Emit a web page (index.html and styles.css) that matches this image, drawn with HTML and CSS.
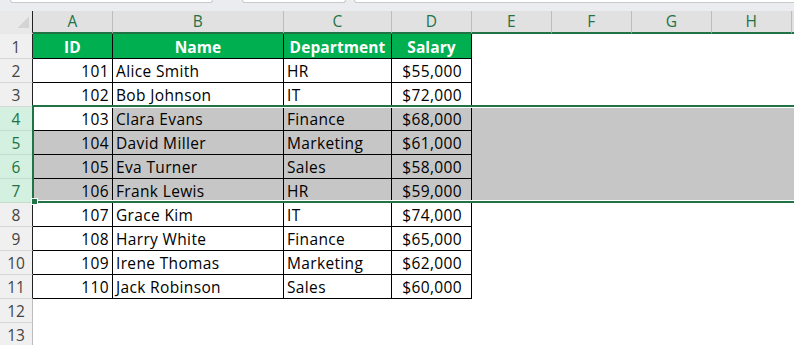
FILE: index.html
```html
<!DOCTYPE html>
<html>
<head>
<meta charset="utf-8">
<link rel="stylesheet" href="styles.css">
</head>
<body>
<div class="topstrip">
  <div class="box box1"></div>
  <div class="box box2"></div>
  <div class="box box3"></div>
</div>
<div class="sheet">
  <div class="corner"></div>
  <div class="ch">A</div><div class="ch">B</div><div class="ch">C</div><div class="ch">D</div>
  <div class="ch">E</div><div class="ch">F</div><div class="ch">G</div><div class="ch">H</div><div class="ch last"></div>

  <div class="rh tb r1">1</div>
  <div class="c t h r1">ID</div><div class="c t h r1">Name</div><div class="c t h r1">Department</div><div class="c t h r1">Salary</div>
  <div class="c r1"></div><div class="c r1"></div><div class="c r1"></div><div class="c r1"></div><div class="c r1"></div>

  <div class="rh tb">2</div>
  <div class="c t num">101</div><div class="c t">Alice Smith</div><div class="c t">HR</div><div class="c t cur">$55,000</div>
  <div class="c"></div><div class="c"></div><div class="c"></div><div class="c"></div><div class="c"></div>

  <div class="rh tb">3</div>
  <div class="c t num">102</div><div class="c t">Bob Johnson</div><div class="c t">IT</div><div class="c t cur">$72,000</div>
  <div class="c"></div><div class="c"></div><div class="c"></div><div class="c"></div><div class="c"></div>

  <div class="rh sel">4</div>
  <div class="c t num">103</div><div class="c t g">Clara Evans</div><div class="c t g">Finance</div><div class="c t g cur">$68,000</div>
  <div class="c g"></div><div class="c g"></div><div class="c g"></div><div class="c g"></div><div class="c g"></div>

  <div class="rh sel">5</div>
  <div class="c t g num">104</div><div class="c t g">David Miller</div><div class="c t g">Marketing</div><div class="c t g cur">$61,000</div>
  <div class="c g"></div><div class="c g"></div><div class="c g"></div><div class="c g"></div><div class="c g"></div>

  <div class="rh sel">6</div>
  <div class="c t g num">105</div><div class="c t g">Eva Turner</div><div class="c t g">Sales</div><div class="c t g cur">$58,000</div>
  <div class="c g"></div><div class="c g"></div><div class="c g"></div><div class="c g"></div><div class="c g"></div>

  <div class="rh sel">7</div>
  <div class="c t g num">106</div><div class="c t g">Frank Lewis</div><div class="c t g">HR</div><div class="c t g cur">$59,000</div>
  <div class="c g"></div><div class="c g"></div><div class="c g"></div><div class="c g"></div><div class="c g"></div>

  <div class="rh tb">8</div>
  <div class="c t num">107</div><div class="c t">Grace Kim</div><div class="c t">IT</div><div class="c t cur">$74,000</div>
  <div class="c"></div><div class="c"></div><div class="c"></div><div class="c"></div><div class="c"></div>

  <div class="rh tb">9</div>
  <div class="c t num">108</div><div class="c t">Harry White</div><div class="c t">Finance</div><div class="c t cur">$65,000</div>
  <div class="c"></div><div class="c"></div><div class="c"></div><div class="c"></div><div class="c"></div>

  <div class="rh tb">10</div>
  <div class="c t num">109</div><div class="c t">Irene Thomas</div><div class="c t">Marketing</div><div class="c t cur">$62,000</div>
  <div class="c"></div><div class="c"></div><div class="c"></div><div class="c"></div><div class="c"></div>

  <div class="rh tb">11</div>
  <div class="c t num">110</div><div class="c t">Jack Robinson</div><div class="c t">Sales</div><div class="c t cur">$60,000</div>
  <div class="c"></div><div class="c"></div><div class="c"></div><div class="c"></div><div class="c"></div>

  <div class="rh">12</div>
  <div class="c"></div><div class="c"></div><div class="c"></div><div class="c"></div>
  <div class="c"></div><div class="c"></div><div class="c"></div><div class="c"></div><div class="c"></div>

  <div class="rh">13</div>
  <div class="c"></div><div class="c"></div><div class="c"></div><div class="c"></div>
  <div class="c"></div><div class="c"></div><div class="c"></div><div class="c"></div><div class="c"></div>

  <div class="selection"></div>
  <div class="handle"></div>
</div>
</body>
</html>
```
FILE: styles.css
```css
* { box-sizing: border-box; }
html, body {
  margin: 0;
  padding: 0;
  background: #ffffff;
  overflow: hidden;
  width: 794px;
  height: 345px;
}
body {
  font-family: "Open Sans", "Liberation Sans", sans-serif;
  font-size: 15.5px;
  letter-spacing: 0.35px;
  color: #000;
}
.topstrip {
  height: 11px;
  background: #eaecef;
  display: flex;
  align-items: flex-start;
  padding-left: 10px;
}
.box {
  height: 3px;
  background: #ffffff;
  border-bottom: 1px solid #c9cacc;
  border-left: 1px solid #c9cacc;
  border-right: 1px solid #c9cacc;
  border-radius: 0 0 4px 4px;
}
.box1 { width: 203px; }
.box2 { width: 104px; margin-left: 29px; }
.box3 { flex: 1; margin-left: 8px; margin-right: -10px; }

.sheet {
  position: relative;
  display: grid;
  grid-template-columns: 33px 80px 171px 108px 80px 80px 80px 80px 80px 1fr;
  grid-template-rows: 23px 25px repeat(12, 24px);
}
.corner {
  position: relative;
  background: #e9e9e9;
  border-bottom: 2px solid #e9e9e9;
  border-right: 1px solid #222;
}
.corner::after {
  content: "";
  position: absolute;
  right: 3px;
  bottom: 4px;
  width: 11px;
  height: 11px;
  background: linear-gradient(to bottom right, transparent 50%, #d4d4d4 50%);
}
.ch {
  background: #e1e1e1;
  border-right: 1px solid #bdbdbd;
  border-bottom: 2px solid #217346;
  color: #217346;
  text-align: center;
  line-height: 21px;
}
.rh {
  background: #f0f0f0;
  border-right: 1px solid #bdbdbd;
  border-bottom: 1px solid #d8d8d8;
  color: #444;
  text-align: center;
  padding-top: 2px;
  line-height: 21px;
  letter-spacing: 0;
}
.rh.tb { border-right-color: #222; }
.rh.sel {
  background: #d3f0e0;
  color: #217346;
  border-bottom-color: #c2dccd;
}
.rh.r1 { line-height: 22px; }
.c {
  padding-top: 2px;
  line-height: 21px;
  padding-left: 3px;
  white-space: nowrap;
  overflow: hidden;
}
.c.r1 { line-height: 22px; }
.t {
  border-right: 1px solid #000;
  border-bottom: 1px solid #000;
}
.h {
  background: #00b050;
  color: #ffffff;
  font-weight: 700;
  text-align: center;
  padding-left: 0;
  letter-spacing: 0.1px;
}
.num { text-align: right; padding-right: 3px; }
.cur { text-align: right; padding-right: 9px; }
.g { background: #c6c6c6; }

.selection {
  position: absolute;
  top: 94px;
  left: 32px;
  right: -10px;
  height: 98px;
  border: 2px solid #217346;
  box-shadow: inset 0 1px 0 #ffffff, inset 0 -1px 0 #ffffff;
  pointer-events: none;
}
.handle {
  position: absolute;
  top: 187px;
  left: 31px;
  width: 7px;
  height: 7px;
  background: #217346;
  border: 1px solid #ffffff;
}
```
